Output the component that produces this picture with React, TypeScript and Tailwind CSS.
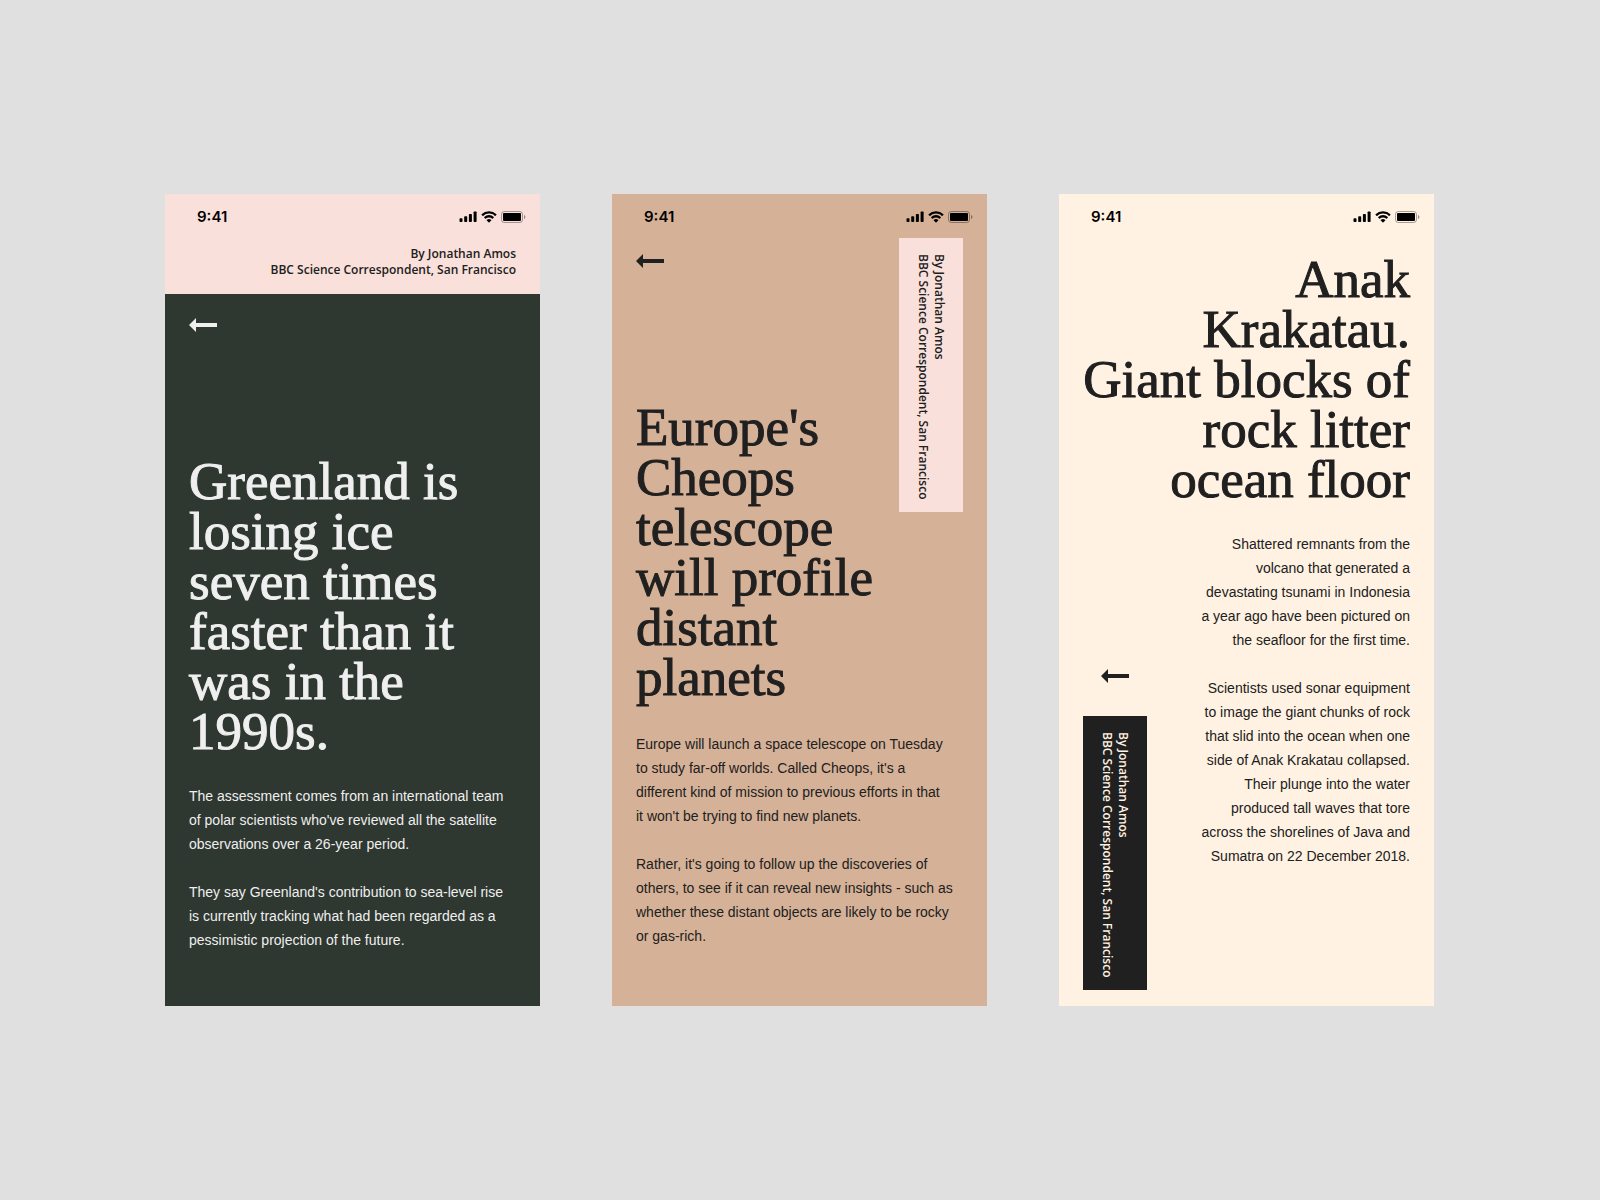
import { Fragment } from "react";
import clsx from "clsx";

function Lines({ lines }: { lines: string[] }) {
  return (
    <>
      {lines.map((line, i) => (
        <Fragment key={line}>
          {i > 0 && <br />}
          {line}
        </Fragment>
      ))}
    </>
  );
}

function StatusBar() {
  return (
    <div className="flex h-11 shrink-0 items-center justify-between pt-[2px] pr-[14px] pl-8 text-black">
      <time className="font-['Inter',sans-serif] text-[15px] leading-5 font-semibold">9:41</time>
      <div className="flex items-center gap-1">
        <svg width="18" height="12" viewBox="0 0 18 12" fill="currentColor" aria-label="Signal" role="img">
          <rect x="0.5" y="7.3" width="3" height="3.7" rx="0.8" />
          <rect x="5.2" y="5.2" width="3" height="5.8" rx="0.8" />
          <rect x="9.9" y="3" width="3" height="8" rx="0.8" />
          <rect x="14.6" y="0.5" width="3" height="10.5" rx="0.8" />
        </svg>
        <svg width="16" height="12" viewBox="0 0 16 12" fill="currentColor" aria-label="Wi-Fi" role="img">
          <path d="M8 2.6c2.2 0 4.3.85 5.9 2.35.12.12.3.12.43 0l1.15-1.18a.32.32 0 0 0 0-.46 10.9 10.9 0 0 0-14.96 0 .32.32 0 0 0 0 .46l1.15 1.18c.12.12.31.12.43 0A8.6 8.6 0 0 1 8 2.6Z" />
          <path d="M8 6.4c1.2 0 2.36.45 3.25 1.26.12.12.31.12.43 0l1.15-1.17a.33.33 0 0 0 0-.47 7.04 7.04 0 0 0-9.66 0 .33.33 0 0 0 0 .47l1.15 1.17c.12.12.31.12.43 0A4.8 4.8 0 0 1 8 6.4Z" />
          <path d="M10.25 8.98a.31.31 0 0 1 0 .46l-2.02 2.03a.32.32 0 0 1-.46 0L5.75 9.44a.31.31 0 0 1 0-.46 3.5 3.5 0 0 1 4.5 0Z" />
        </svg>
        <svg width="25" height="12" viewBox="0 0 25 12" aria-label="Battery" role="img">
          <rect x="0.5" y="0.5" width="21" height="11" rx="2.8" fill="none" stroke="currentColor" strokeOpacity="0.35" />
          <path d="M23 4v4c.8-.34 1.4-1.13 1.4-2S23.8 4.34 23 4Z" fill="currentColor" fillOpacity="0.4" />
          <rect x="2" y="2" width="18" height="8" rx="1" fill="currentColor" />
        </svg>
      </div>
    </div>
  );
}

function BackButton({ className }: { className?: string }) {
  return (
    <button type="button" aria-label="Back" className={clsx("block h-[14px] w-7 shrink-0 cursor-pointer", className)}>
      <svg width="28" height="14" viewBox="0 0 28 14" fill="currentColor">
        <path d="M0 7 7 0v5h21v4H7v5Z" />
      </svg>
    </button>
  );
}

function Byline({ className }: { className?: string }) {
  return (
    <address className={clsx("font-['Open_Sans',sans-serif] text-xs leading-4 font-semibold whitespace-nowrap not-italic", className)}>
      <Lines lines={["By Jonathan Amos", "BBC Science Correspondent, San Francisco"]} />
    </address>
  );
}

function Headline({ lines, className }: { lines: string[]; className?: string }) {
  return (
    <h1
      className={clsx(
        "font-['Liberation_Serif',serif] text-[53px] leading-[50px] whitespace-nowrap [-webkit-text-stroke:1px_currentColor]",
        className,
      )}
    >
      <Lines lines={lines} />
    </h1>
  );
}

function Body({ paragraphs, className }: { paragraphs: string[][]; className?: string }) {
  return (
    <div className={clsx("flex flex-col gap-6 font-['Liberation_Sans',sans-serif] text-sm leading-6", className)}>
      {paragraphs.map((lines) => (
        <p key={lines[0]} className="whitespace-nowrap">
          <Lines lines={lines} />
        </p>
      ))}
    </div>
  );
}

const screen = "flex min-h-[812px] w-full max-w-[375px] flex-col";

function Greenland() {
  return (
    <article className={clsx(screen, "bg-[#2e3730] text-[#efefef]")}>
      <header className="bg-[#fae0db] pb-4 text-[#202020]">
        <StatusBar />
        <Byline className="px-6 pt-2 text-right" />
      </header>
      <div className="flex grow flex-col px-6 pt-6 pb-[54px]">
        <BackButton />
        <Headline
          className="mt-auto"
          lines={["Greenland is", "losing ice", "seven times", "faster than it", "was in the", "1990s."]}
        />
        <Body
          className="mt-7"
          paragraphs={[
            [
              "The assessment comes from an international team",
              "of polar scientists who've reviewed all the satellite",
              "observations over a 26-year period.",
            ],
            [
              "They say Greenland's contribution to sea-level rise",
              "is currently tracking what had been regarded as a",
              "pessimistic projection of the future.",
            ],
          ]}
        />
      </div>
    </article>
  );
}

function Cheops() {
  return (
    <article className={clsx(screen, "relative bg-[#d5b197] text-[#202020]")}>
      <StatusBar />
      <Byline className="absolute top-11 right-6 h-[274px] bg-[#fae0db] p-4 [writing-mode:vertical-rl]" />
      <div className="flex grow flex-col px-6 pt-4 pb-[58px]">
        <BackButton />
        <Headline
          className="mt-auto"
          lines={["Europe's", "Cheops", "telescope", "will profile", "distant", "planets"]}
        />
        <Body
          className="mt-[30px]"
          paragraphs={[
            [
              "Europe will launch a space telescope on Tuesday",
              "to study far-off worlds. Called Cheops, it's a",
              "different kind of mission to previous efforts in that",
              "it won't be trying to find new planets.",
            ],
            [
              "Rather, it's going to follow up the discoveries of",
              "others, to see if it can reveal new insights - such as",
              "whether these distant objects are likely to be rocky",
              "or gas-rich.",
            ],
          ]}
        />
      </div>
    </article>
  );
}

function Krakatau() {
  return (
    <article className={clsx(screen, "bg-[#fff2e2] text-[#202020]")}>
      <StatusBar />
      <div className="flex grow flex-col px-6 pt-4 pb-4">
        <Headline
          className="self-end text-right"
          lines={["Anak", "Krakatau.", "Giant blocks of", "rock litter", "ocean floor"]}
        />
        <div className="mt-7 flex grow justify-between">
          <div className="flex flex-col items-center justify-end">
            <BackButton className="mb-[33px]" />
            <Byline className="h-[274px] bg-[#202020] p-4 text-[#fff2e2] [writing-mode:vertical-rl]" />
          </div>
          <Body
            className="text-right"
            paragraphs={[
              [
                "Shattered remnants from the",
                "volcano that generated a",
                "devastating tsunami in Indonesia",
                "a year ago have been pictured on",
                "the seafloor for the first time.",
              ],
              [
                "Scientists used sonar equipment",
                "to image the giant chunks of rock",
                "that slid into the ocean when one",
                "side of Anak Krakatau collapsed.",
                "Their plunge into the water",
                "produced tall waves that tore",
                "across the shorelines of Java and",
                "Sumatra on 22 December 2018.",
              ],
            ]}
          />
        </div>
      </div>
    </article>
  );
}

export default function App() {
  return (
    <main className="flex min-h-screen flex-col items-center justify-center gap-[72px] bg-[#e0e0e0] py-12 lg:flex-row lg:pr-px">
      <Greenland />
      <Cheops />
      <Krakatau />
    </main>
  );
}
